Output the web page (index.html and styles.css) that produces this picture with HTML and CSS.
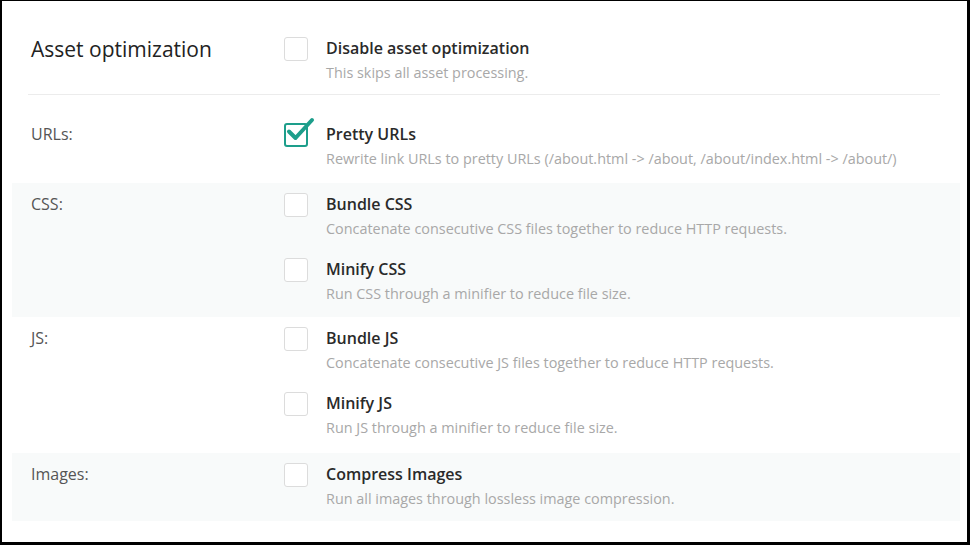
FILE: index.html
```html
<!DOCTYPE html>
<html>
<head>
<meta charset="utf-8">
<link rel="stylesheet" href="styles.css">
</head>
<body>
<div class="frame">
  <div class="header">
    <h2 class="heading">Asset optimization</h2>
    <div class="options">
      <div class="option">
        <span class="box"></span>
        <div class="text">
          <div class="title">Disable asset optimization</div>
          <div class="desc">This skips all asset processing.</div>
        </div>
      </div>
    </div>
  </div>
  <div class="divider"></div>
  <div class="group first">
    <div class="label">URLs:</div>
    <div class="options">
      <div class="option">
        <span class="box checked">
          <svg class="tick" width="34" height="30" viewBox="0 0 34 30"><path d="M5 15.5 L11.5 22 L28 4" fill="none" stroke="#1d9e8b" stroke-width="4" stroke-linecap="round" stroke-linejoin="round"/></svg>
        </span>
        <div class="text">
          <div class="title">Pretty URLs</div>
          <div class="desc">Rewrite link URLs to pretty URLs (/about.html -&gt; /about, /about/index.html -&gt; /about/)</div>
        </div>
      </div>
    </div>
  </div>
  <div class="group shaded">
    <div class="label">CSS:</div>
    <div class="options">
      <div class="option">
        <span class="box"></span>
        <div class="text">
          <div class="title">Bundle CSS</div>
          <div class="desc">Concatenate consecutive CSS files together to reduce HTTP requests.</div>
        </div>
      </div>
      <div class="option">
        <span class="box"></span>
        <div class="text">
          <div class="title">Minify CSS</div>
          <div class="desc">Run CSS through a minifier to reduce file size.</div>
        </div>
      </div>
    </div>
  </div>
  <div class="group js">
    <div class="label">JS:</div>
    <div class="options">
      <div class="option">
        <span class="box"></span>
        <div class="text">
          <div class="title">Bundle JS</div>
          <div class="desc">Concatenate consecutive JS files together to reduce HTTP requests.</div>
        </div>
      </div>
      <div class="option">
        <span class="box"></span>
        <div class="text">
          <div class="title">Minify JS</div>
          <div class="desc">Run JS through a minifier to reduce file size.</div>
        </div>
      </div>
    </div>
  </div>
  <div class="group shaded last">
    <div class="label">Images:</div>
    <div class="options">
      <div class="option">
        <span class="box"></span>
        <div class="text">
          <div class="title">Compress Images</div>
          <div class="desc">Run all images through lossless image compression.</div>
        </div>
      </div>
    </div>
  </div>
</div>
</body>
</html>
```
FILE: styles.css
```css
* { box-sizing: border-box; }
html, body { margin: 0; padding: 0; background: #fff; }
body {
  font-family: "Open Sans", "Noto Sans", sans-serif;
  color: #222;
}
.frame {
  width: 970px;
  height: 545px;
  border-style: solid;
  border-color: #000;
  border-width: 1px 3px 3px 2px;
  padding: 0 7px 0 10px;
  overflow: hidden;
}
.header {
  display: flex;
  padding: 36px 0 11px 19px;
}
.heading {
  margin: 0;
  width: 253px;
  font-size: 21px;
  font-weight: 400;
  line-height: 24px;
  color: #222;
}
.divider {
  height: 1px;
  background: #ececec;
  margin: 0 20px 18px 16px;
}
.group {
  display: flex;
  padding: 10px 0 13px 19px;
}
.group.first { padding-bottom: 14px; }
.group.js { padding-bottom: 15px; }
.group.last { padding-bottom: 12px; }
.group.shaded { background: #f8fafa; }
.label {
  width: 253px;
  font-size: 16px;
  line-height: 22px;
  color: #555;
}
.options {
  display: flex;
  flex-direction: column;
  gap: 19px;
}
.option {
  display: flex;
  gap: 18px;
}
.box {
  position: relative;
  flex: none;
  width: 24px;
  height: 24px;
  border: 1px solid #dcdcdc;
  border-radius: 3px;
  background: #fff;
}
.box.checked { border: 2px solid #1d9e8b; }
.tick {
  position: absolute;
  left: -2px;
  top: -9px;
}
.title {
  font-size: 16px;
  font-weight: 600;
  line-height: 22px;
  color: #2a2a2a;
}
.desc {
  margin-top: 4px;
  font-size: 14.4px;
  line-height: 20px;
  color: #a8a8a8;
}
```
